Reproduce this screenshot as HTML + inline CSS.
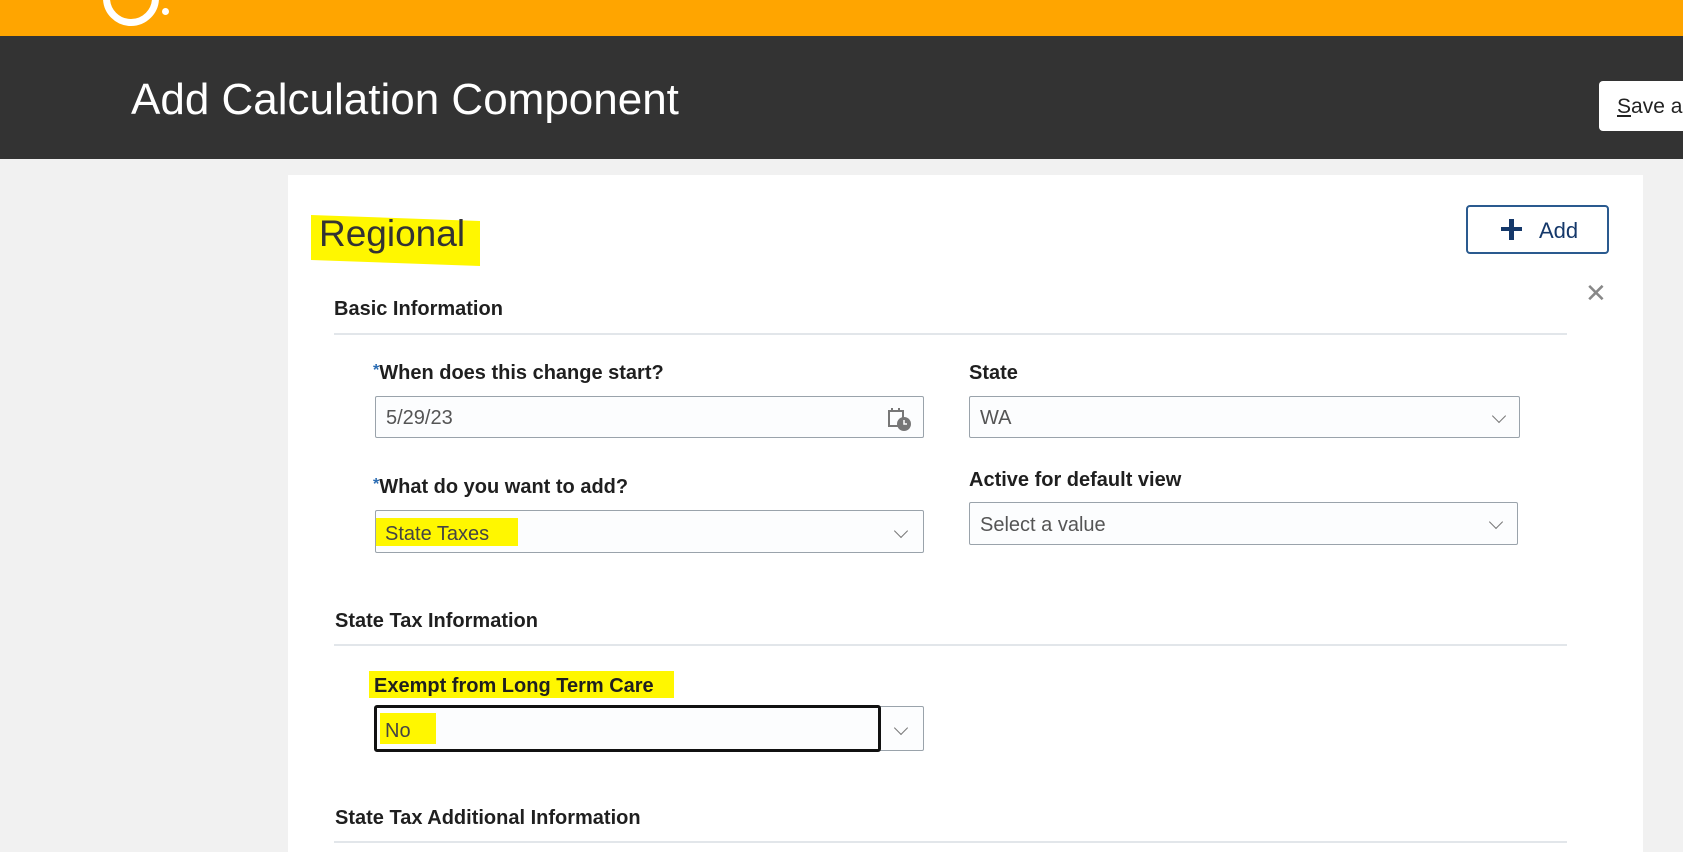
<!DOCTYPE html>
<html><head><meta charset="utf-8"><style>
*{margin:0;padding:0;box-sizing:border-box}
body{width:1683px;height:852px;overflow:hidden;background:#f1f1f1;font-family:"Liberation Sans",sans-serif;position:relative;color:#161513}
.a{position:absolute;white-space:nowrap}
.lbl{font-size:20px;font-weight:bold;color:#1f1f1f}
.inp{position:absolute;border:1px solid #9aa3ab;background:#fcfdfe;border-radius:2px;font-size:20px;color:#555;padding-left:10px;padding-top:3px;display:flex;align-items:center}
.line{position:absolute;height:2px;background:#e2e6ea}
.hl{background:#fff700}
.chev{position:absolute;width:10px;height:10px;border-right:1.5px solid #777;border-bottom:1.5px solid #777;transform:rotate(45deg)}
</style></head><body>
<div class="a" style="left:0;top:0;width:1683px;height:36px;background:#ffa500"></div>
<div class="a" style="left:103px;top:-30px;width:56px;height:56px;border:7px solid #fff;border-radius:50%"></div>
<div class="a" style="left:162px;top:8px;width:7px;height:7px;border-radius:50%;background:#fff"></div>
<div class="a" style="left:0;top:36px;width:1683px;height:123px;background:#333"></div>
<div class="a" style="left:131px;top:75px;font-size:44px;color:#fff;font-weight:300">Add Calculation Component</div>
<div class="a" style="left:1599px;top:81px;width:100px;height:50px;background:#fff;border-radius:4px;font-size:21px;padding:14px 0 0 18px;color:#222"><u>S</u>ave and</div>
<div class="a" style="left:288px;top:175px;width:1355px;height:677px;background:#fff"></div>
<div class="a hl" style="left:311px;top:218px;width:169px;height:45px;transform:skewY(2deg)"></div>
<div class="a" style="left:319px;top:213px;font-size:37px;color:#333">Regional</div>
<div class="a" style="left:1466px;top:205px;width:143px;height:49px;border:2px solid #2a5a8f;border-radius:4px;background:#fff"></div>
<div class="a" style="left:1501px;top:227px;width:21px;height:4px;background:#15386a"></div>
<div class="a" style="left:1509px;top:219px;width:5px;height:21px;background:#15386a"></div>
<div class="a" style="left:1539px;top:218px;font-size:22px;color:#15386a">Add</div>
<div class="a" style="left:1585px;top:278px;font-size:26px;color:#888;font-weight:300">✕</div>
<div class="a lbl" style="left:334px;top:298px">Basic Information</div>
<div class="line" style="left:334px;top:333px;width:1233px"></div>
<div class="a lbl" style="left:373px;top:362px"><span style="color:#2a6cb3;font-size:16px;vertical-align:top">*</span>When does this change start?</div>
<div class="inp" style="left:375px;top:396px;width:549px;height:42px">5/29/23</div>
<svg class="a" style="left:887px;top:406px" width="26" height="26" viewBox="0 0 26 26"><rect x="2" y="5" width="14" height="15" fill="none" stroke="#777" stroke-width="2"/><line x1="5" y1="2" x2="5" y2="6" stroke="#777" stroke-width="2"/><line x1="12" y1="2" x2="12" y2="6" stroke="#777" stroke-width="2"/><circle cx="17" cy="18" r="7" fill="#777"/><path d="M17 14v4h3" stroke="#fff" stroke-width="1.5" fill="none"/></svg>
<div class="a lbl" style="left:969px;top:362px">State</div>
<div class="inp" style="left:969px;top:396px;width:551px;height:42px">WA</div>
<div class="chev" style="left:1494px;top:411px"></div>
<div class="a lbl" style="left:373px;top:476px"><span style="color:#2a6cb3;font-size:16px;vertical-align:top">*</span>What do you want to add?</div>
<div class="inp" style="left:375px;top:510px;width:549px;height:43px"></div>
<div class="a hl" style="left:376px;top:518px;width:142px;height:28px"></div>
<div class="a" style="left:385px;top:523px;font-size:20px;color:#444">State Taxes</div>
<div class="chev" style="left:896px;top:526px"></div>
<div class="a lbl" style="left:969px;top:469px">Active for default view</div>
<div class="inp" style="left:969px;top:502px;width:549px;height:43px">Select a value</div>
<div class="chev" style="left:1491px;top:517px"></div>
<div class="a lbl" style="left:335px;top:610px">State Tax Information</div>
<div class="line" style="left:334px;top:644px;width:1233px"></div>
<div class="a hl" style="left:369px;top:671px;width:305px;height:27px"></div>
<div class="a lbl" style="left:374px;top:675px">Exempt from Long Term Care</div>
<div class="inp" style="left:375px;top:706px;width:549px;height:45px"></div>
<div class="a" style="left:374px;top:705px;width:507px;height:47px;border:3px solid #111;border-radius:3px"></div>
<div class="a hl" style="left:380px;top:713px;width:56px;height:31px"></div>
<div class="a" style="left:385px;top:720px;font-size:20px;color:#444">No</div>
<div class="chev" style="left:896px;top:723px"></div>
<div class="a lbl" style="left:335px;top:807px">State Tax Additional Information</div>
<div class="line" style="left:334px;top:841px;width:1233px"></div>
</body></html>
